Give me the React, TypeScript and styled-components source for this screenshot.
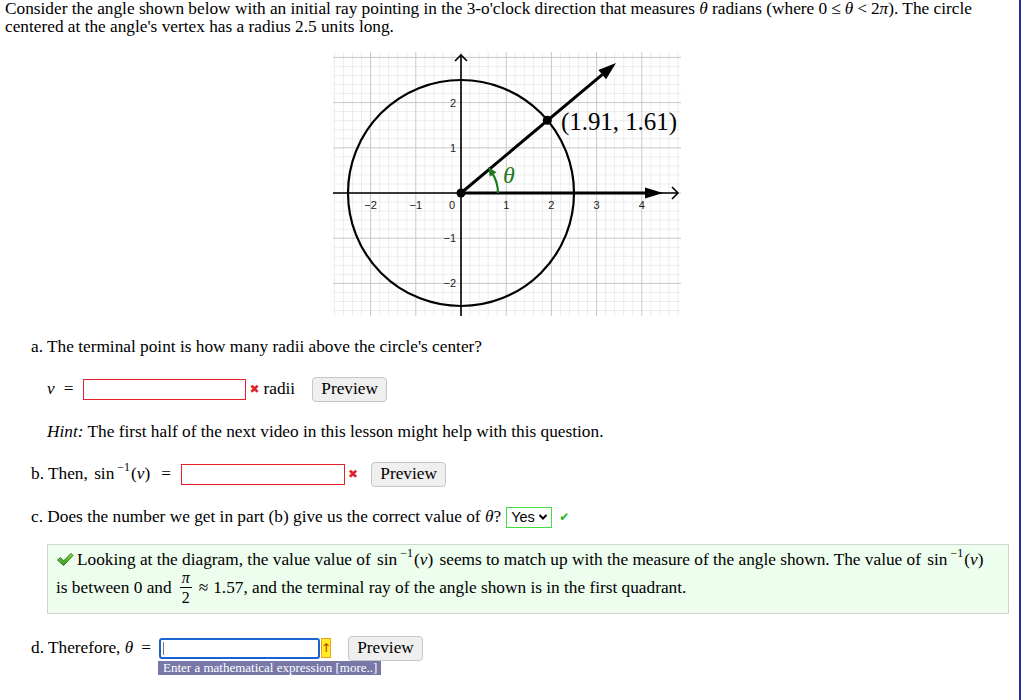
import React from 'react';
import styled, { createGlobalStyle } from 'styled-components';

const GlobalStyle = createGlobalStyle`
  html, body {
    margin: 0;
    padding: 0;
    background: #ffffff;
  }
  body {
    font-family: "Liberation Serif", "Times New Roman", serif;
    font-size: 17.3px;
    color: #000;
  }
`;

const Page = styled.div`
  box-sizing: border-box;
  width: 1021px;
  min-height: 700px;
  padding: 0 0 0 5px;
  border-right: 2px solid #2a2aa8;
`;

const Intro = styled.p`
  margin: 0;
  line-height: 18px;
  padding-top: 0;
`;

const FigureWrap = styled.div`
  display: flex;
  justify-content: center;
  padding-right: 10px;
  margin-top: 16px;
`;

const Parts = styled.div`
  padding-left: 26px;
  margin-top: 21px;
`;

const Question = styled.div<{ gap: number }>`
  line-height: 20px;
  margin-top: ${(p) => p.gap}px;
`;

const AnswerRow = styled.div<{ gap: number; indent?: number }>`
  display: flex;
  align-items: center;
  height: 26px;
  margin-top: ${(p) => p.gap}px;
  margin-left: ${(p) => p.indent || 0}px;
  white-space: nowrap;
`;

const Hint = styled.div`
  line-height: 20px;
  margin-top: 20px;
  margin-left: 16px;
`;

const I = styled.span`
  font-style: italic;
`;

const Rel = styled.span`
  margin: 0 4px;
`;

const Sup = styled.sup`
  font-size: 12px;
  vertical-align: 0;
  position: relative;
  top: -8px;
  margin-left: 3px;
  margin-right: 1px;
`;

const Eq = styled.span<{ tight?: boolean }>`
  margin: ${(p) => (p.tight ? '0 6px 0 8px' : '0 8px 0 9px')};
`;

const AnswerInput = styled.span<{ state: 'wrong' | 'focus'; w: number }>`
  position: relative;
  display: inline-block;
  box-sizing: border-box;
  width: ${(p) => p.w}px;
  height: 21px;
  margin-left: 2px;
  background: #fff;
  border-width: ${(p) => (p.state === 'wrong' ? '1px' : '2px')};
  border-style: solid;
  border-color: ${(p) => (p.state === 'wrong' ? '#e8202a' : '#1a64d2')};
  border-radius: ${(p) => (p.state === 'wrong' ? '0' : '3px')};
`;

const Caret = styled.span`
  position: absolute;
  left: 2px;
  top: 2px;
  width: 1px;
  height: 13px;
  background: #777;
`;

const WrongMark = styled.span`
  color: #e0202a;
  font-family: "DejaVu Sans", sans-serif;
  font-size: 12px;
  margin-left: 3px;
`;

const Unit = styled.span`
  margin-left: 4px;
`;

const PreviewButton = styled.button<{ gap: number }>`
  font-family: "Liberation Serif", "Times New Roman", serif;
  font-size: 17.3px;
  color: #000;
  background: #efefef;
  border: 1px solid #c6c6c6;
  border-radius: 4px;
  height: 25px;
  width: 75px;
  padding: 0;
  margin-left: ${(p) => p.gap}px;
`;

const SelectBox = styled.span`
  display: inline-flex;
  align-items: center;
  box-sizing: border-box;
  height: 21px;
  width: 46px;
  margin-left: 5px;
  padding: 0 3px 0 4px;
  border: 1.5px solid #3ee03e;
  font-family: "Liberation Sans", Arial, sans-serif;
  font-size: 14.5px;
  gap: 3px;
  background: #fff;
`;

const CheckMark = styled.span`
  color: #26b526;
  font-family: "DejaVu Sans", sans-serif;
  font-size: 12px;
  margin-left: 7px;
`;

const Feedback = styled.div`
  box-sizing: border-box;
  width: 962px;
  margin: 14px 0 0 16px;
  padding: 5px 8px 8px 8px;
  background: #edfdee;
  border: 1px solid #d2d6d2;
  line-height: 20px;
`;

const FeedbackLine2 = styled.div`
  display: flex;
  align-items: center;
  height: 34px;
  white-space: pre;
`;

const Frac = styled.span`
  display: inline-flex;
  flex-direction: column;
  align-items: center;
  font-size: 16px;
  line-height: 14px;
  margin: 0 7px 0 8px;
`;

const FracTop = styled.span`
  font-style: italic;
  padding: 0 2px 2px;
  border-bottom: 1px solid #000;
`;

const FracBottom = styled.span`
  padding-top: 3px;
`;

const Approx = styled.span`
  margin: 0 5px 0 0;
`;

const MathSpan = styled.span`
  margin: 0 2px;
`;

const AnswerSlot = styled.span`
  position: relative;
  display: inline-flex;
  align-items: center;
`;

const WarnFlag = styled.span`
  display: inline-flex;
  align-items: center;
  justify-content: center;
  box-sizing: border-box;
  width: 10px;
  height: 20px;
  margin-left: 1px;
  background: #ffee22;
  border: 1px solid #f0a020;
  color: #c03000;
  font-family: "DejaVu Sans", sans-serif;
  font-size: 12px;
`;

const Tooltip = styled.span`
  position: absolute;
  left: 1px;
  top: 23px;
  padding: 0 4px 0 5px;
  background: #7777a8;
  color: #fff;
  font-size: 13px;
  line-height: 14px;
  white-space: nowrap;
`;

/* ---------- graph ---------- */

const W = 348;
const H = 264;
const OX = 128;
const OY = 141;
const U = 45.2;

const arrowHead = (x0: number, y0: number, tx: number, ty: number, len: number, half: number) => {
  const dx = tx - x0;
  const dy = ty - y0;
  const d = Math.hypot(dx, dy);
  const ux = dx / d;
  const uy = dy / d;
  const bx = tx - ux * len;
  const by = ty - uy * len;
  const px = -uy;
  const py = ux;
  return {
    base: [bx, by],
    points: `${tx},${ty} ${bx + px * half},${by + py * half} ${bx - px * half},${by - py * half}`,
  };
};

const UnitCircleGraph = () => {
  const minor: React.ReactNode[] = [];
  const major: React.ReactNode[] = [];
  for (let i = -16; i <= 26; i++) {
    const x = OX + (i * U) / 5;
    if (x < 0 || x > W) continue;
    const el = (
      <line key={'x' + i} x1={x} y1={0} x2={x} y2={H} stroke={i % 5 === 0 ? '#c8c8c8' : '#ececec'} strokeWidth={1} />
    );
    (i % 5 === 0 ? major : minor).push(el);
  }
  for (let j = -15; j <= 17; j++) {
    const y = OY - (j * U) / 5;
    if (y < 0 || y > H) continue;
    const el = (
      <line key={'y' + j} x1={0} y1={y} x2={W} y2={y} stroke={j % 5 === 0 ? '#c8c8c8' : '#ececec'} strokeWidth={1} />
    );
    (j % 5 === 0 ? major : minor).push(el);
  }

  const ray = arrowHead(OX, OY, 283, 11, 18, 6);
  const xRay = arrowHead(OX, OY, 330, OY, 18, 5.5);

  const arcR = 37;
  const arcEnd = (33 * Math.PI) / 180;
  const ax = OX + arcR * Math.cos(arcEnd);
  const ay = OY - arcR * Math.sin(arcEnd);
  const tdx = -Math.sin(arcEnd);
  const tdy = -Math.cos(arcEnd);
  const arcHead = arrowHead(ax - tdx * 2, ay - tdy * 2, ax + tdx * 7, ay + tdy * 7, 9, 4);

  const xLabels = [-2, -1, 1, 2, 3, 4];
  const yLabels = [2, 1, -1, -2];

  return (
    <svg width={W} height={H} viewBox={`0 0 ${W} ${H}`} style={{ display: 'block' }}>
      {minor}
      {major}
      {/* axes */}
      <line x1={0} y1={OY} x2={345} y2={OY} stroke="#000" strokeWidth={1.6} />
      <polyline points={`339,${OY - 6} 345,${OY} 339,${OY + 6}`} fill="none" stroke="#000" strokeWidth={1.6} />
      <line x1={OX} y1={H} x2={OX} y2={3} stroke="#000" strokeWidth={1.6} />
      <polyline points={`${OX - 6},9 ${OX},3 ${OX + 6},9`} fill="none" stroke="#000" strokeWidth={1.6} />

      {xLabels.map((n) => (
        <text
          key={'lx' + n}
          x={OX + n * U}
          y={OY + 16}
          textAnchor="middle"
          fontFamily="Liberation Sans, Arial, sans-serif"
          fontSize={11}
          fill="#222"
        >
          {n < 0 ? '\u2212' + Math.abs(n) : n}
        </text>
      ))}
      <text x={OX - 9} y={OY + 16} textAnchor="middle" fontFamily="Liberation Sans, Arial, sans-serif" fontSize={11} fill="#222">
        0
      </text>
      {yLabels.map((n) => (
        <text
          key={'ly' + n}
          x={OX - 5}
          y={OY - n * U + 4}
          textAnchor="end"
          fontFamily="Liberation Sans, Arial, sans-serif"
          fontSize={11}
          fill="#222"
        >
          {n < 0 ? '\u2212' + Math.abs(n) : n}
        </text>
      ))}

      {/* circle of radius 2.5 */}
      <circle cx={OX} cy={OY} r={2.5 * U} fill="none" stroke="#000" strokeWidth={2.2} />

      {/* initial ray */}
      <line x1={OX} y1={OY} x2={xRay.base[0]} y2={OY} stroke="#000" strokeWidth={3} />
      <polygon points={xRay.points} fill="#000" />

      {/* terminal ray */}
      <line x1={OX} y1={OY} x2={ray.base[0]} y2={ray.base[1]} stroke="#000" strokeWidth={3} />
      <polygon points={ray.points} fill="#000" />

      {/* angle arc */}
      <path d={`M ${OX + arcR} ${OY} A ${arcR} ${arcR} 0 0 0 ${ax} ${ay}`} fill="none" stroke="#1e7a1e" strokeWidth={2.2} />
      <polygon points={arcHead.points} fill="#1e7a1e" />
      <text x={170} y={131} fontFamily="Liberation Serif, Times New Roman, serif" fontStyle="italic" fontSize={24} fill="#1e7a1e">
        θ
      </text>

      <circle cx={OX} cy={OY} r={4.5} fill="#000" />
      <circle cx={OX + 1.91 * U} cy={OY - 1.61 * U} r={4.5} fill="#000" />
      <text x={228} y={78} fontFamily="Liberation Serif, Times New Roman, serif" fontSize={25} fill="#000" textLength={116}>
        (1.91, 1.61)
      </text>
    </svg>
  );
};

const BoxCheck = () => (
  <svg width={18} height={15} viewBox="0 0 18 15" style={{ verticalAlign: '-2px', marginRight: 3 }}>
    <defs>
      <linearGradient id="chk" x1="0" y1="0" x2="0" y2="1">
        <stop offset="0" stopColor="#8ee04a" />
        <stop offset="1" stopColor="#2e9a1e" />
      </linearGradient>
    </defs>
    <path d="M1.5 8 L4.5 5.5 L7.5 9 L15 1.5 L17 3.5 L7.5 13.5 Z" fill="url(#chk)" stroke="#2c6e1c" strokeWidth={1} strokeLinejoin="round" />
  </svg>
);

const Chevron = () => (
  <svg width={10} height={8} viewBox="0 0 10 8">
    <polyline points="1.5,2 5,5.5 8.5,2" fill="none" stroke="#000" strokeWidth={2} />
  </svg>
);

const SinInv = () => (
  <MathSpan>
    sin<Sup>−1</Sup>(<I>v</I>)
  </MathSpan>
);

export default function App() {
  return (
    <Page>
      <GlobalStyle />
      <Intro>
        Consider the angle shown below with an initial ray pointing in the 3-o'clock direction that measures <I>θ</I>{' '}
        radians (where 0<Rel>≤</Rel><I>θ</I><Rel>&lt;</Rel>2<I>π</I>). The circle centered at the angle's vertex has a
        radius 2.5 units long.
      </Intro>

      <FigureWrap>
        <UnitCircleGraph />
      </FigureWrap>

      <Parts>
        <Question gap={0}>a. The terminal point is how many radii above the circle's center?</Question>

        <AnswerRow gap={19} indent={16}>
          <I>v</I>
          <Eq>=</Eq>
          <AnswerInput state="wrong" w={163} />
          <WrongMark>✖</WrongMark>
          <Unit>radii</Unit>
          <PreviewButton gap={17}>Preview</PreviewButton>
        </AnswerRow>

        <Hint>
          <I>Hint:</I> The first half of the next video in this lesson might help with this question.
        </Hint>

        <AnswerRow gap={19}>
          b. Then,&nbsp;<SinInv />
          <Eq>=</Eq>
          <AnswerInput state="wrong" w={164} />
          <WrongMark>✖</WrongMark>
          <PreviewButton gap={13}>Preview</PreviewButton>
        </AnswerRow>

        <AnswerRow gap={17}>
          c. Does the number we get in part (b) give us the correct value of&nbsp;<I>θ</I>?
          <SelectBox>
            Yes
            <Chevron />
          </SelectBox>
          <CheckMark>✔</CheckMark>
        </AnswerRow>

        <Feedback>
          <div>
            <BoxCheck />
            Looking at the diagram, the value value of <SinInv /> seems to match up with the measure of the angle shown. The
            value of <SinInv />
          </div>
          <FeedbackLine2>
            is between 0 and
            <Frac>
              <FracTop>π</FracTop>
              <FracBottom>2</FracBottom>
            </Frac>
            <Approx>≈</Approx>1.57, and the terminal ray of the angle shown is in the first quadrant.
          </FeedbackLine2>
        </Feedback>

        <AnswerRow gap={21}>
          d. Therefore,&nbsp;<I>θ</I>
          <Eq tight>=</Eq>
          <AnswerSlot>
            <AnswerInput state="focus" w={161}>
              <Caret />
            </AnswerInput>
            <WarnFlag>↑</WarnFlag>
            <Tooltip>Enter a mathematical expression [more..]</Tooltip>
          </AnswerSlot>
          <PreviewButton gap={17}>Preview</PreviewButton>
        </AnswerRow>
      </Parts>
    </Page>
  );
}
